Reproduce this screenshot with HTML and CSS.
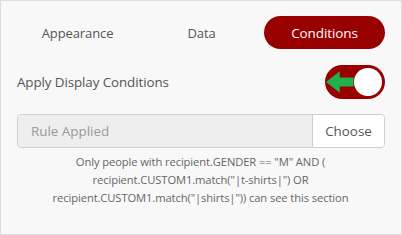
FILE: index.html
```html
<!DOCTYPE html>
<html>
<head>
<meta charset="utf-8">
<link rel="stylesheet" href="styles.css">
</head>
<body>
<div class="panel">
  <div class="tabs">
    <div class="tab">Appearance</div>
    <div class="tab">Data</div>
    <div class="tab active">Conditions</div>
  </div>
  <div class="row">
    <span class="label">Apply Display Conditions</span>
    <div class="toggle">
      <svg class="arrow" width="29" height="24" viewBox="0 0 29 24"><polygon points="0,12 14,1 14,7.5 28,7.5 28,16.5 14,16.5 14,23" fill="#22b14c"/></svg>
      <span class="knob"></span>
    </div>
  </div>
  <div class="group">
    <div class="input">Rule Applied</div>
    <div class="btn">Choose</div>
  </div>
  <p class="help">Only people with recipient.GENDER == "M" AND (<br>recipient.CUSTOM1.match("|t-shirts|") OR<br>recipient.CUSTOM1.match("|shirts|")) can see this section</p>
</div>
</body>
</html>
```
FILE: styles.css
```css
html, body { margin: 0; padding: 0; }
body { font-family: "Open Sans", "Noto Sans", sans-serif; }
.panel {
  width: 402px; height: 235px; box-sizing: border-box;
  border: 1px solid #dcdcdc; background: #f8f8f8;
  padding: 15px 16px 0 15px;
}
.tabs { display: grid; grid-template-columns: 123px 123px 121px; gap: 1px; height: 33px; }
.tab {
  display: flex; align-items: center; justify-content: center;
  font-size: 13px; color: #555; border-radius: 17px; letter-spacing: -0.1px;
}
.tab.active { background: #990000; color: #fff; font-size: 13.5px; }
.row {
  display: flex; align-items: center; justify-content: space-between;
  margin-top: 16px; height: 34px; padding-left: 1px;
}
.label { font-size: 13.4px; color: #555; letter-spacing: -0.1px; }
.toggle {
  width: 60px; height: 34px; border-radius: 17px; background: #990000;
  display: flex; align-items: center; justify-content: space-between;
  box-sizing: border-box; padding: 0 3px 0 1px;
}
.arrow { display: block; }
.knob { width: 28px; height: 28px; border-radius: 50%; background: #fff; }
.group {
  display: flex; margin-top: 15px; height: 34px; box-sizing: border-box;
  border: 1px solid #cfcfcf; border-radius: 4px; overflow: hidden;
  margin-left: 1px;
}
.input {
  flex: 1; background: #eeeeee; color: #999; font-size: 13.4px;
  display: flex; align-items: center; padding-left: 13px;
}
.btn {
  width: 71px; background: #fff; border-left: 1px solid #cfcfcf;
  display: flex; align-items: center; justify-content: center;
  font-size: 13.4px; color: #555;
}
.help {
  margin: 5px 0 0; text-align: center; font-size: 11.2px; line-height: 18px;
  color: #666; letter-spacing: -0.1px;
}
```
